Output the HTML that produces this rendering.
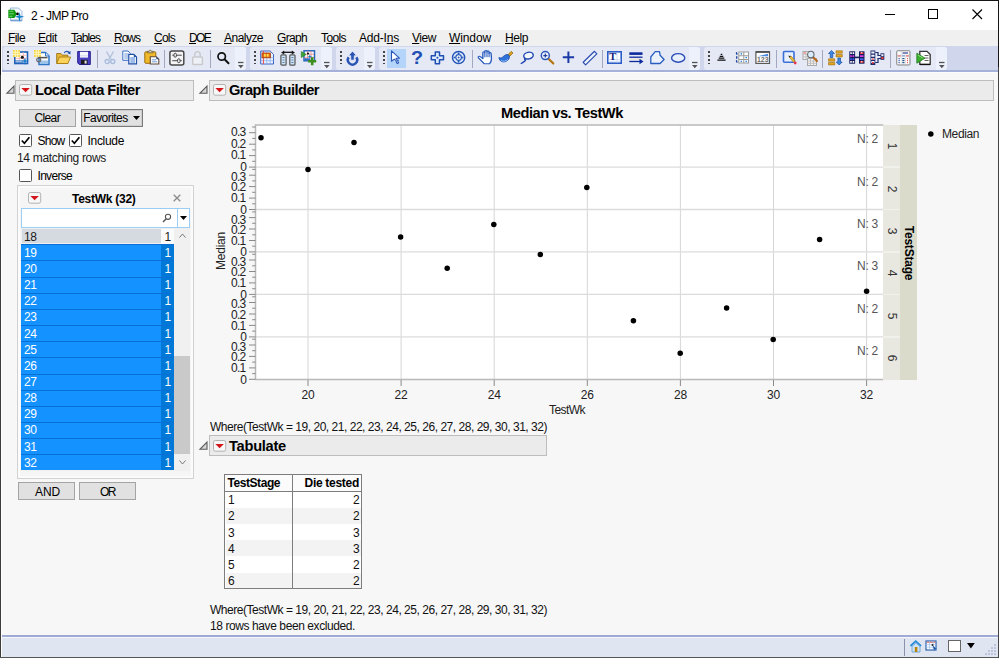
<!DOCTYPE html>
<html><head><meta charset="utf-8"><title>2 - JMP Pro</title>
<style>
html,body{margin:0;padding:0;background:#f7f7f7;}
body{width:999px;height:658px;overflow:hidden;position:relative;font-family:"Liberation Sans",sans-serif;}
#w{position:absolute;left:0;top:0;width:999px;height:658px;overflow:hidden;background:#f7f7f7;}
.t{position:absolute;white-space:nowrap;margin:0;padding:0;}
.b{position:absolute;}
svg{position:absolute;overflow:visible;}
u{text-decoration:underline;text-underline-offset:1px;}
</style></head><body><div id="w">
<div class="b" style="left:0px;top:0px;width:999px;height:30px;background:#ffffff;"></div>
<div class="t" style="left:31.00px;top:7.64px;font-size:12px;line-height:16px;letter-spacing:-0.557px;color:#000;">2 - JMP Pro</div>
<svg style="left:880px;top:5px" width="110" height="20" viewBox="0 0 110 20"><path d="M5 9.5h10" stroke="#000" stroke-width="1" fill="none"/><rect x="48.5" y="4.5" width="9" height="9" stroke="#000" stroke-width="1" fill="none"/><path d="M92.5 4.5l9.5 9.5M102 4.5l-9.5 9.5" stroke="#000" stroke-width="1.1" fill="none"/></svg>
<svg style="left:8px;top:7px" width="17" height="16" viewBox="0 0 17 16"><path d="M2.500 1h8l3.500 3.500v9.500h-11.500z" fill="#f3f7fd" stroke="#9db9e0" stroke-width="1"/><path d="M3 13.300h11" stroke="#6f9bd0" stroke-width="1.200"/><path d="M.3 2.800h6.200l2.300 4.100-2.300 4.100h-6.200z" fill="#129a12"/><path d="M1.300 4.300h4M1.300 6.800h4.500M1.300 9.300h3" stroke="#7fd87f" stroke-width=".9"/><circle cx="9.500" cy="6.900" r="1.300" fill="#000"/><path d="M11.500 5.200l.9 3.600 4 .9-4 1-.9 4.300-1-4.300-3.800-1 3.800-.9z" fill="#1583c8"/></svg>
<div class="b" style="left:0px;top:30px;width:999px;height:16px;background:#f0f0f0;"></div>
<div class="t" style="left:8.00px;top:30.24px;font-size:12px;line-height:16px;letter-spacing:-0.584px;color:#000;"><u>F</u>ile</div>
<div class="t" style="left:38.00px;top:30.24px;font-size:12px;line-height:16px;letter-spacing:-0.419px;color:#000;"><u>E</u>dit</div>
<div class="t" style="left:71.00px;top:30.24px;font-size:12px;line-height:16px;letter-spacing:-0.948px;color:#000;"><u>T</u>ables</div>
<div class="t" style="left:114.00px;top:30.24px;font-size:12px;line-height:16px;letter-spacing:-1.001px;color:#000;"><u>R</u>ows</div>
<div class="t" style="left:154.00px;top:30.24px;font-size:12px;line-height:16px;letter-spacing:-0.751px;color:#000;"><u>C</u>ols</div>
<div class="t" style="left:189.00px;top:30.24px;font-size:12px;line-height:16px;letter-spacing:-1.668px;color:#000;"><u>D</u>OE</div>
<div class="t" style="left:224.00px;top:30.24px;font-size:12px;line-height:16px;letter-spacing:-0.527px;color:#000;"><u>A</u>nalyze</div>
<div class="t" style="left:277.00px;top:30.24px;font-size:12px;line-height:16px;letter-spacing:-0.670px;color:#000;"><u>G</u>raph</div>
<div class="t" style="left:321.00px;top:30.24px;font-size:12px;line-height:16px;letter-spacing:-0.602px;color:#000;">T<u>o</u>ols</div>
<div class="t" style="left:359.00px;top:30.24px;font-size:12px;line-height:16px;letter-spacing:-0.193px;color:#000;">Add-I<u>n</u>s</div>
<div class="t" style="left:412.00px;top:30.24px;font-size:12px;line-height:16px;letter-spacing:-0.448px;color:#000;"><u>V</u>iew</div>
<div class="t" style="left:449.00px;top:30.24px;font-size:12px;line-height:16px;letter-spacing:-0.113px;color:#000;"><u>W</u>indow</div>
<div class="t" style="left:505.00px;top:30.24px;font-size:12px;line-height:16px;letter-spacing:-0.420px;color:#000;"><u>H</u>elp</div>
<div class="b" style="left:0px;top:46px;width:999px;height:24px;background:#d0d7ec;"></div>
<div class="b" style="left:0px;top:70px;width:999px;height:2px;background:#a6b1d9;"></div>
<div class="b" style="left:0px;top:72px;width:999px;height:1px;background:#fcfcfd;"></div>
<div class="b" style="left:3px;top:46.5px;width:243px;height:23.5px;background:#e5e9f6;border-radius:3px;"></div>
<div class="b" style="left:235px;top:46.5px;width:11px;height:23.5px;background:#edf1fb;border-radius:0 3px 3px 0;"></div>
<div class="b" style="left:7.2px;top:51.3px;width:1.7000000000000002px;height:1.7000000000000028px;background:#444;"></div>
<div class="b" style="left:7.2px;top:55.099999999999994px;width:1.7000000000000002px;height:1.7000000000000028px;background:#444;"></div>
<div class="b" style="left:7.2px;top:58.9px;width:1.7000000000000002px;height:1.7000000000000028px;background:#444;"></div>
<div class="b" style="left:7.2px;top:62.699999999999996px;width:1.7000000000000002px;height:1.70000000000001px;background:#444;"></div>
<svg style="left:238px;top:61px" width="6" height="8" viewBox="0 0 6 8"><path d="M0 1.500h5.500" stroke="#555" stroke-width="1.300"/><path d="M0 4h5.600l-2.800 3.200z" fill="#555"/></svg>
<div class="b" style="left:250px;top:46.5px;width:82px;height:23.5px;background:#e5e9f6;border-radius:3px;"></div>
<div class="b" style="left:321px;top:46.5px;width:11px;height:23.5px;background:#edf1fb;border-radius:0 3px 3px 0;"></div>
<div class="b" style="left:254.2px;top:51.3px;width:1.700000000000017px;height:1.7000000000000028px;background:#444;"></div>
<div class="b" style="left:254.2px;top:55.099999999999994px;width:1.700000000000017px;height:1.7000000000000028px;background:#444;"></div>
<div class="b" style="left:254.2px;top:58.9px;width:1.700000000000017px;height:1.7000000000000028px;background:#444;"></div>
<div class="b" style="left:254.2px;top:62.699999999999996px;width:1.700000000000017px;height:1.70000000000001px;background:#444;"></div>
<svg style="left:324px;top:61px" width="6" height="8" viewBox="0 0 6 8"><path d="M0 1.500h5.500" stroke="#555" stroke-width="1.300"/><path d="M0 4h5.600l-2.800 3.200z" fill="#555"/></svg>
<div class="b" style="left:336px;top:46.5px;width:39px;height:23.5px;background:#e5e9f6;border-radius:3px;"></div>
<div class="b" style="left:364px;top:46.5px;width:11px;height:23.5px;background:#edf1fb;border-radius:0 3px 3px 0;"></div>
<div class="b" style="left:340.2px;top:51.3px;width:1.6999999999999886px;height:1.7000000000000028px;background:#444;"></div>
<div class="b" style="left:340.2px;top:55.099999999999994px;width:1.6999999999999886px;height:1.7000000000000028px;background:#444;"></div>
<div class="b" style="left:340.2px;top:58.9px;width:1.6999999999999886px;height:1.7000000000000028px;background:#444;"></div>
<div class="b" style="left:340.2px;top:62.699999999999996px;width:1.6999999999999886px;height:1.70000000000001px;background:#444;"></div>
<svg style="left:367px;top:61px" width="6" height="8" viewBox="0 0 6 8"><path d="M0 1.500h5.500" stroke="#555" stroke-width="1.300"/><path d="M0 4h5.600l-2.800 3.200z" fill="#555"/></svg>
<div class="b" style="left:379px;top:46.5px;width:321px;height:23.5px;background:#e5e9f6;border-radius:3px;"></div>
<div class="b" style="left:689px;top:46.5px;width:11px;height:23.5px;background:#edf1fb;border-radius:0 3px 3px 0;"></div>
<div class="b" style="left:383.2px;top:51.3px;width:1.6999999999999886px;height:1.7000000000000028px;background:#444;"></div>
<div class="b" style="left:383.2px;top:55.099999999999994px;width:1.6999999999999886px;height:1.7000000000000028px;background:#444;"></div>
<div class="b" style="left:383.2px;top:58.9px;width:1.6999999999999886px;height:1.7000000000000028px;background:#444;"></div>
<div class="b" style="left:383.2px;top:62.699999999999996px;width:1.6999999999999886px;height:1.70000000000001px;background:#444;"></div>
<svg style="left:692px;top:61px" width="6" height="8" viewBox="0 0 6 8"><path d="M0 1.500h5.500" stroke="#555" stroke-width="1.300"/><path d="M0 4h5.600l-2.800 3.200z" fill="#555"/></svg>
<div class="b" style="left:704px;top:46.5px;width:243px;height:23.5px;background:#e5e9f6;border-radius:3px;"></div>
<div class="b" style="left:936px;top:46.5px;width:11px;height:23.5px;background:#edf1fb;border-radius:0 3px 3px 0;"></div>
<div class="b" style="left:708.2px;top:51.3px;width:1.6999999999999318px;height:1.7000000000000028px;background:#444;"></div>
<div class="b" style="left:708.2px;top:55.099999999999994px;width:1.6999999999999318px;height:1.7000000000000028px;background:#444;"></div>
<div class="b" style="left:708.2px;top:58.9px;width:1.6999999999999318px;height:1.7000000000000028px;background:#444;"></div>
<div class="b" style="left:708.2px;top:62.699999999999996px;width:1.6999999999999318px;height:1.70000000000001px;background:#444;"></div>
<svg style="left:939px;top:61px" width="6" height="8" viewBox="0 0 6 8"><path d="M0 1.500h5.500" stroke="#555" stroke-width="1.300"/><path d="M0 4h5.600l-2.800 3.200z" fill="#555"/></svg>
<div class="b" style="left:96.5px;top:50px;width:1.2000000000000028px;height:18px;background:#a3a7c0;"></div>
<div class="b" style="left:164px;top:50px;width:1.1999999999999886px;height:18px;background:#a3a7c0;"></div>
<div class="b" style="left:210px;top:50px;width:1.1999999999999886px;height:18px;background:#a3a7c0;"></div>
<div class="b" style="left:471.5px;top:50px;width:1.1999999999999886px;height:18px;background:#a3a7c0;"></div>
<div class="b" style="left:602px;top:50px;width:1.2000000000000455px;height:18px;background:#a3a7c0;"></div>
<div class="b" style="left:776px;top:50px;width:1.2000000000000455px;height:18px;background:#a3a7c0;"></div>
<div class="b" style="left:822px;top:50px;width:1.2000000000000455px;height:18px;background:#a3a7c0;"></div>
<div class="b" style="left:890px;top:50px;width:1.2000000000000455px;height:18px;background:#a3a7c0;"></div>
<svg style="left:13px;top:50px" width="16" height="15" viewBox="0 0 16 15"><rect x="1.800" y="2" width="12.700" height="11.500" fill="#fff" stroke="#1f5fb4" stroke-width="1.600"/><path d="M2 5.300h12M2 8.400h12M6.300 2v9M10.500 2v9" stroke="#eda2a2" stroke-width=".7"/><path d="M2.300 10.400h8v2.800h-8z" fill="#2e6fc2"/><path d="M2.800 11.800h7" stroke="#d6e4f7" stroke-width=".9"/><path d="M0 0h7v7h-7z" fill="#f6d84a"/><path d="M0 2.3h7M0 4.6h7M2.3 0v7M4.6 0v7" stroke="#fff7c8" stroke-width=".9"/><circle cx="9.300" cy="7.300" r="1.500" fill="#111"/><path d="M12 7.300l.9 3 3.300.7-3.300.8-.9 3.400-1-3.400-3-.8 3-.7z" fill="#1b7fd0"/></svg>
<svg style="left:34px;top:50px" width="16" height="16" viewBox="0 0 16 16"><path d="M5 2.5h6.5l3.5 3.5v8.5h-10z" fill="#fff" stroke="#2d74c4" stroke-width="1.5"/><path d="M11.5 2.5v3.5h3.5" fill="#dbe9f8" stroke="#2d74c4" stroke-width="1"/><path d="M6 10.5h8v3.5h-8z" fill="#9cc3ea"/><path d="M0 0h7v7h-7z" fill="#f6d84a"/><path d="M0 2.3h7M0 4.6h7M2.3 0v7M4.6 0v7" stroke="#fff7c8" stroke-width=".9"/><circle cx="4.7" cy="9.8" r="2" fill="none" stroke="#6b6b6b" stroke-width="1.2"/><path d="M4.5 7.6h9" stroke="#555" stroke-width="1.5"/></svg>
<svg style="left:56px;top:50px" width="16" height="15" viewBox="0 0 16 15"><path d="M0.7 3.5h4.2l1.3 1.6h5.6v8.2h-11.1z" fill="#e9b735" stroke="#9a7414" stroke-width=".9"/><path d="M3.3 7h11.3l-2.7 6.5h-11.2z" fill="#fbd25b" stroke="#a77d12" stroke-width=".9"/><path d="M8.2 3c1.3-2 3.6-2 4.9-.5" fill="none" stroke="#2a5db0" stroke-width="1.2"/><path d="M14.6 1l-.3 3.4-3-1.4z" fill="#1d4fa5"/></svg>
<svg style="left:77px;top:51px" width="14" height="14" viewBox="0 0 14 14"><path d="M.7 .5h12.6v13h-11l-1.6-1.6z" fill="#4a3fc0" stroke="#2a1f8e" stroke-width="1"/><rect x="3" y=".8" width="8" height="5.8" fill="#f4f6fb"/><path d="M3 4.8h8" stroke="#cfd4ea" stroke-width="1"/><rect x="4" y="8.8" width="6.6" height="4.4" fill="#1c1c1c"/><rect x="7.6" y="9.6" width="2" height="3" fill="#e8e8f4"/></svg>
<svg style="left:104px;top:51px" width="12" height="14" viewBox="0 0 12 14"><path d="M2.5 .5l4.5 8M9.5 .5l-4.500 8" stroke="#b5c3da" stroke-width="1.5" fill="none"/><circle cx="3.2" cy="10.6" r="2.1" fill="#dfe7f5" stroke="#a9bbdc" stroke-width="1.3"/><circle cx="8.800" cy="10.6" r="2.1" fill="#dfe7f5" stroke="#a9bbdc" stroke-width="1.3"/></svg>
<svg style="left:122px;top:50px" width="16" height="15" viewBox="0 0 16 15"><path d="M.8 1h5.2l2.500 2.500v6.800h-7.700z" fill="#fff" stroke="#3a6fc0" stroke-width="1"/><path d="M2.300 4h4M2.300 6h4.500M2.300 8h4.500" stroke="#5b8fd8" stroke-width=".9"/><path d="M6.800 4.300h5l2.700 2.700v6.800h-7.700z" fill="#fff" stroke="#1f4fa5" stroke-width="1.200"/><path d="M11.800 4.300v2.700h2.700z" fill="#1f4fa5"/><path d="M8.300 8h4.700M8.300 10h4.700M8.300 12h4.700" stroke="#3d7ad0" stroke-width="1"/></svg>
<svg style="left:144px;top:50px" width="16" height="15" viewBox="0 0 16 15"><rect x=".8" y="1.800" width="11" height="11.500" rx="1" fill="#f0b92b" stroke="#9b6d12" stroke-width="1"/><path d="M3.500 2.800v-1.500h1.700c0-1.500 2.200-1.500 2.200 0h1.700v1.500z" fill="#d9d9d9" stroke="#6b5a2a" stroke-width=".8"/><path d="M6.300 6.800h6l2.500 2.400v4.800h-8.500z" fill="#fff" stroke="#5f4a3a" stroke-width="1.100"/><path d="M12.300 6.800v2.400h2.500z" fill="#26467f"/><path d="M7.800 9.800h4.200M7.800 11.800h5.500" stroke="#6f9bd8" stroke-width="1"/></svg>
<svg style="left:169px;top:50px" width="16" height="16" viewBox="0 0 16 16"><rect x=".9" y=".9" width="13.900" height="14.200" rx="2" fill="#f4f4f6" stroke="#4a4a4a" stroke-width="1.500"/><path d="M3.300 5.200h9.500M3.300 10.700h9.500" stroke="#4a4a4a" stroke-width="1"/><rect x="5" y="3.200" width="2.400" height="4" rx="1.200" fill="#f4f4f6" stroke="#4a4a4a" stroke-width="1"/><rect x="8.600" y="8.700" width="2.400" height="4" rx="1.200" fill="#f4f4f6" stroke="#4a4a4a" stroke-width="1"/></svg>
<svg style="left:191px;top:50px" width="13" height="16" viewBox="0 0 13 16"><path d="M3.800 7v-2.500c0-3.800 5.400-3.800 5.400 0v2.500" fill="none" stroke="#c9c9cc" stroke-width="1.400"/><rect x="1.700" y="7" width="9.700" height="7.500" rx=".8" fill="#eef0f7" stroke="#c9c9cc" stroke-width="1.400"/></svg>
<svg style="left:216px;top:51px" width="14" height="14" viewBox="0 0 14 14"><circle cx="5.700" cy="5.500" r="3.700" fill="none" stroke="#111" stroke-width="1.700"/><path d="M8.500 8.300l4 4" stroke="#111" stroke-width="2" stroke-linecap="round"/></svg>
<svg style="left:260px;top:50px" width="14" height="15" viewBox="0 0 14 15"><path d="M.7 1h9.500l3.300 3.300v9.700h-12.800z" fill="#eaf2ff" stroke="#3a62c4" stroke-width="1"/><path d="M.7 7.500h12.800M.7 10.700h12.800M6.800 1v13M10.200 4v10" stroke="#8fb3ef" stroke-width=".8"/><path d="M3.400 1v13" stroke="#ee4b4b" stroke-width="1"/><rect x="2" y="3" width="8.500" height="4.800" fill="#e8671b" stroke="#a8420e" stroke-width=".8"/><rect x="4" y="4" width="1.800" height="2.700" fill="#f6e24a"/><rect x="6.800" y="4" width="1.800" height="2.700" fill="#f6e24a"/></svg>
<svg style="left:280px;top:50px" width="16" height="16" viewBox="0 0 16 16"><path d="M3 2.300h10" fill="none" stroke="#111" stroke-width="1.300"/><path d="M1 2.800l3.200-2.300v3.800zM15 2.800l-3.200-2.300v3.800z" fill="#111"/><rect x=".9" y="4.800" width="5.200" height="10.400" rx="1" fill="#cfe3f5" stroke="#555" stroke-width="1.200"/><rect x="9.800" y="4.800" width="5.200" height="10.400" rx="1" fill="#cfe3f5" stroke="#555" stroke-width="1.200"/><path d="M2.500 7.500h2M2.500 10h2M2.500 12.500h2M11.400 7.500h2M11.400 10h2M11.400 12.500h2" stroke="#5b7fa8" stroke-width="1"/></svg>
<svg style="left:301px;top:50px" width="16" height="16" viewBox="0 0 16 16"><rect x="3" y=".8" width="10.500" height="10" fill="#fff" stroke="#2a66b8" stroke-width="1.500"/><path d="M3 4.200h10M3 7.400h10M6.500 1v9.500M10 1v9.500" stroke="#e27a7a" stroke-width=".7"/><path d="M3.300 8.300h6v2.200h-6z" fill="#2e6fc2"/><circle cx="7" cy="3.500" r="1.100" fill="#111"/><path d="M8.800 4.200l.7 1.800 2 .5-2 .5-.7 1.900-.6-1.900-1.900-.5 1.900-.5z" fill="#1b7fd0"/><path d="M.3 1.500l4.800 3-4.800 3z" fill="#3aa535" stroke="#1f7a1c" stroke-width=".6"/><path d="M11.200 7.200v8M7.200 11.200h8" stroke="#3a8f1e" stroke-width="2.600"/></svg>
<svg style="left:346px;top:51px" width="13" height="14" viewBox="0 0 13 14"><path d="M2.700 6.300a4.600 4.600 0 1 0 7.600 0" fill="none" stroke="#2a55b5" stroke-width="2.500"/><path d="M6.500 0l4.300 4.800h-2.500v4.400h-3.600v-4.400h-2.500z" fill="#2a55b5" stroke="#e8ecf8" stroke-width=".9"/></svg>
<div class="b" style="left:387px;top:49px;width:19px;height:18.500px;background:#b4d4fa"></div>
<svg style="left:390px;top:50px" width="11" height="15" viewBox="0 0 11 15"><path d="M1.500 .8v10.500l2.800-2.200 1.600 1.300c.4 1.600.4 2.200 1.400 3.200l1.300-.8c-.9-.9-.9-1.900-.4-2.600h-.9l-1.200-2h3.300z" fill="#fff" stroke="#2a56b8" stroke-width="1.100" stroke-linejoin="round"/></svg>
<div class="t" style="left:411px;top:47.800px;font-size:18px;line-height:20px;font-weight:bold;color:#1f4fb3;transform:scaleX(1.100);transform-origin:left">?</div>
<svg style="left:430px;top:51px" width="15" height="14" viewBox="0 0 15 14"><path d="M5.300 .9h4.200v3.900h4v4h-4v3.900h-4.200v-3.900h-4v-4h4z" fill="#ddeafb" stroke="#1f4fb3" stroke-width="1.500" stroke-linejoin="round"/><circle cx="7.400" cy="6.800" r="1" fill="#1f4fb3"/></svg>
<svg style="left:451px;top:50px" width="15" height="15" viewBox="0 0 15 15"><circle cx="7.600" cy="7.500" r="6.100" fill="#e3edfb" stroke="#2556b8" stroke-width="1.500"/><circle cx="7.600" cy="7.500" r="2.800" fill="#fff" stroke="#2556b8" stroke-width="1.200"/><circle cx="7.600" cy="7.500" r="1" fill="#2556b8"/><path d="M7.600 2.300l1.300 1.700h-2.600zM7.600 12.700l1.300-1.700h-2.600zM2.400 7.500l1.700-1.300v2.600zM12.800 7.500l-1.700-1.300v2.600z" fill="#2556b8"/></svg>
<svg style="left:476px;top:50px" width="18" height="15" viewBox="0 0 18 15"><g transform="translate(0.6 0) scale(1.250 1)"><path d="M6.200 13.800l-4.700-6c-.7-1.200.6-2 1.500-1.100l2 2v-6c0-1.300 1.500-1.300 1.600 0v-1.200c.1-1.300 1.600-1.300 1.700 0v.6c.1-1.300 1.600-1.300 1.700 0v1.300c.2-1.200 1.600-1.100 1.600.1l.3 5.200c0 2-.5 3.600-1.500 5.100z" fill="#fff" stroke="#2a5dc0" stroke-width="1.100" stroke-linejoin="round"/><path d="M6.600 2.800v4.500M8.300 2.300v5M10 2.800v4.500" stroke="#2a5dc0" stroke-width=".9"/></g></svg>
<svg style="left:498px;top:50px" width="16" height="14" viewBox="0 0 16 14"><path d="M9.800 4.800l3.500-3.500 1.700 1.700-3.500 3.500z" fill="#d8a31f" stroke="#8a6410" stroke-width=".7"/><path d="M1.200 7.200c.8 1.200 2.300 1 3.500-.2 2-2 4-3 5.500-2.300 1.700.8 1.800 3.500-.4 5.500-2.500 2.300-6.300 2.300-8-.2-.8-1.200-.9-2.300-.6-2.800z" fill="#2f72d8" stroke="#1c4aa8" stroke-width=".8"/><path d="M3 10.500c2 1.200 5 .8 6.800-1" stroke="#8fc0ff" stroke-width="1" fill="none"/></svg>
<svg style="left:520px;top:51px" width="15" height="14" viewBox="0 0 15 14"><ellipse cx="8.500" cy="4.600" rx="4.800" ry="3.300" fill="#f2f6fd" stroke="#2147b0" stroke-width="1.400" transform="rotate(-12 8.500 4.600)"/><path d="M5 7.200c-.8.800-.2 1.800.6 1.800-.3 1-2.600 2.500-4.400 3.500" fill="none" stroke="#2147b0" stroke-width="1.400" stroke-linecap="round"/></svg>
<svg style="left:540px;top:50px" width="15" height="15" viewBox="0 0 15 15"><path d="M8.300 8.600l5 4.800" stroke="#c8841a" stroke-width="2.200" stroke-linecap="round"/><path d="M8.300 8.600l5 4.800" stroke="#6b4a12" stroke-width=".5" transform="translate(.6 .9)"/><circle cx="5.300" cy="5.600" r="4" fill="#f2f6ff" stroke="#2a56b8" stroke-width="1.500"/><path d="M3.300 5.600h4M5.300 3.600v4" stroke="#1f3f9a" stroke-width="1.200"/></svg>
<svg style="left:562px;top:51px" width="13" height="13" viewBox="0 0 13 13"><path d="M6.400 .6v11.300M.8 6.200h11.300" stroke="#1b3aa6" stroke-width="2"/></svg>
<svg style="left:582px;top:50px" width="16" height="16" viewBox="0 0 16 16"><path d="M1.200 12.300l11.300-11 2.300 2.600-11.200 11z" fill="#eef2fb" stroke="#2a4db0" stroke-width="1.200" stroke-linejoin="round"/></svg>
<svg style="left:607px;top:51px" width="15" height="13" viewBox="0 0 15 13"><rect x=".8" y=".8" width="13.400" height="11.400" fill="#fff" stroke="#2a5dc8" stroke-width="1.600"/><path d="M10 2v9.500M1.500 8.500h12M1.500 10.300h12" stroke="#c6d8f2" stroke-width=".8"/><text x="2.200" y="9" font-family="Liberation Serif,serif" font-weight="bold" font-size="10.500" fill="#101a80">T</text></svg>
<svg style="left:629px;top:51px" width="15" height="13" viewBox="0 0 15 13"><path d="M.3 2.600h13.200" stroke="#0b2a9c" stroke-width="2.600"/><path d="M.3 6.200h13.200" stroke="#0b2a9c" stroke-width="1.300"/><path d="M.3 8.200h13.200" stroke="#efe6c8" stroke-width="1"/><path d="M.3 10.500h11" stroke="#0b2a9c" stroke-width="1.300"/><path d="M10.500 7.800l4 2.700-4 2.700z" fill="#0b2a9c"/></svg>
<svg style="left:650px;top:50px" width="15" height="15" viewBox="0 0 15 15"><path d="M.8 7l4.400-5.300h4.300l.6 3.500 4 4.300-4 4h-9.300z" fill="#eaf1fc" stroke="#2a5dc0" stroke-width="1.300" stroke-linejoin="round"/></svg>
<svg style="left:670px;top:52px" width="16" height="12" viewBox="0 0 16 12"><ellipse cx="8.200" cy="5.900" rx="6.600" ry="4.300" fill="#e8f0fc" stroke="#2a4db8" stroke-width="1.400"/></svg>
<svg style="left:716px;top:53px" width="11" height="9" viewBox="0 0 11 9"><path d="M4.700 1.400h1.600M3.700 3.300h3.600M2.700 5.200h5.600M1.400 7.200h8.200" stroke="#111" stroke-width="1.300"/></svg>
<svg style="left:735px;top:51px" width="15" height="13" viewBox="0 0 15 13"><rect x="3.300" y=".5" width="10.700" height="12" fill="#9a9a9a"/><path d="M4.300 1.500h4v2.800h-4zM9.300 1.500h3.700v2.800h-3.700zM4.300 5.300h4v2.600h-4zM9.300 5.300h3.700v2.600h-3.700zM4.300 8.900h4v2.600h-4zM9.300 8.900h3.700v2.600h-3.700z" fill="#fff"/><circle cx="6.300" cy="2.900" r=".8" fill="#1e7fe0"/><circle cx="11.200" cy="6.600" r=".8" fill="#1e7fe0"/><circle cx="6.300" cy="10.200" r=".8" fill="#1e7fe0"/><circle cx="11.200" cy="10.200" r=".8" fill="#1e7fe0"/><path d="M1.300 1.300l.8 2.500M1.700 5.300v2.500M1.300 9.300l.8 2.300" stroke="#1a3f9a" stroke-width="1.300"/></svg>
<svg style="left:755px;top:51px" width="16" height="13" viewBox="0 0 16 13"><rect x=".9" y=".8" width="13.600" height="11.600" fill="#fff" stroke="#5a5a5a" stroke-width="1.200"/><path d="M1 1h13.400" stroke="#444" stroke-width="1.500"/><path d="M2.800 5.300l10.200-2.500v2.500z" fill="#4a8be0"/><text x="2" y="11.300" font-family="Liberation Sans,sans-serif" font-size="6.500" font-weight="bold" fill="#6d6d6d" textLength="11.500" lengthAdjust="spacingAndGlyphs">123</text></svg>
<svg style="left:782px;top:50px" width="15" height="16" viewBox="0 0 15 16"><rect x="1.500" y="1.500" width="10.500" height="10.800" rx="1" fill="#e9f1fd" stroke="#3a6fd8" stroke-width="1.600"/><path d="M7.300 7.200l4.300 5.100 1.600-1.300-4.300-5.100z" fill="#f1c232" stroke="#8a6410" stroke-width=".6"/><path d="M6.300 5.600l1 2 1.500-1.400z" fill="#222"/><circle cx="13.200" cy="13" r="1.400" fill="#e8354a"/></svg>
<svg style="left:802px;top:50px" width="17" height="16" viewBox="0 0 17 16"><rect x="1" y="1.500" width="9" height="8" fill="#f4f4f4" stroke="#a8a8a8" stroke-width="1"/><path d="M1 4.200h9M1 6.900h9M4 1.500v8M7 1.500v8" stroke="#b5b5b5" stroke-width=".8"/><path d="M1.500 2h2.300v2h-2.300z" fill="#f0a0a0"/><rect x="5.500" y="8.500" width="9" height="7" fill="#f4f4f4" stroke="#a8a8a8" stroke-width="1"/><path d="M5.500 11h9M5.500 13.300h9M8.500 8.500v7M11.500 8.500v7" stroke="#b5b5b5" stroke-width=".8"/><path d="M11 7l4 4" stroke="#b8651a" stroke-width="2" stroke-linecap="round"/><circle cx="8.800" cy="4.500" r="3.200" fill="#d8ecff" stroke="#6a6a6a" stroke-width="1.100"/></svg>
<svg style="left:828px;top:50px" width="15" height="16" viewBox="0 0 15 16"><path d="M3.500 .5l3 3h-1.700v4h-2.600v-4h-1.700z" fill="#3d8be0" stroke="#1a4fa8" stroke-width=".7"/><path d="M11.200 15l3-3h-1.700v-4h-2.600v4h-1.700z" fill="#3d8be0" stroke="#1a4fa8" stroke-width=".7"/><path d="M8 .8h6.300v2.400h-6.300zM8 4.500h6.300v2.400h-6.300zM.5 8.800h6.300v2.400h-6.300zM.5 12.500h6.300v2.400h-6.300z" fill="#e2a820" stroke="#9a6c10" stroke-width=".6"/></svg>
<svg style="left:849px;top:51px" width="16" height="13" viewBox="0 0 16 13"><rect x=".3" y=".3" width="5.800" height="12.400" fill="#141a5a"/><rect x="10" y=".3" width="5.500" height="12.400" fill="#141a5a"/><path d="M6 6.400h4" stroke="#141a5a" stroke-width="1.600"/><path d="M1.200 1.300h1.600v1.600h-1.600zM3.600 1.300h1.600v1.600h-1.600zM1.200 10.100h1.600v1.600h-1.600zM3.600 10.100h1.600v1.600h-1.600z" fill="#fff"/><path d="M1.200 4.200h1.600v1.700h-1.600zM3.600 4.200h1.600v1.700h-1.600zM11 4.200h3.500v1.700h-3.500z" fill="#e040e0"/><path d="M1.200 7.200h1.600v1.700h-1.600zM3.600 7.200h1.600v1.700h-1.600zM11 7.200h3.500v1.700h-3.500z" fill="#3a6ae8"/><path d="M11 1.300h3.500v1.700h-3.500zM11 10.100h3.500v1.700h-3.500z" fill="#e83a3a"/><path d="M12 1.300h1.300v1h-1.300zM12 10.300h1.300v1h-1.300z" fill="#fff"/></svg>
<svg style="left:870px;top:50px" width="15" height="16" viewBox="0 0 15 16"><rect x=".5" y=".5" width="4.800" height="14.500" fill="#1a2a6a"/><path d="M1.300 1.500h3.200v2h-3.200zM1.300 4.700h3.200v2h-3.200zM1.300 7.900h3.200v2h-3.200zM1.300 11.100h3.200v2h-3.200z" fill="#f4f4ff"/><path d="M2 12h1.800v1.800h-1.800zM2 8.500h1.800v1.300h-1.800z" fill="#e83a3a"/><path d="M5.300 2.500h2.700v3h3M5.300 12.500h2.700v-4h3" fill="none" stroke="#1a2a6a" stroke-width="1.200"/><rect x="10.500" y="3.300" width="3.800" height="6.500" fill="#1a2a6a"/><path d="M11.300 4.200h2.200v2h-2.200z" fill="#f4f4ff"/><path d="M11.300 7h2.200v2h-2.200z" fill="#e83a3a"/></svg>
<svg style="left:896px;top:50px" width="15" height="16" viewBox="0 0 15 16"><rect x=".7" y=".7" width="13.300" height="14.300" rx="1" fill="#e4e4e4" stroke="#8a8a8a" stroke-width="1"/><rect x="1.700" y="1.700" width="3" height="2.800" fill="#fff"/><rect x="5.800" y="1.700" width="7.200" height="2.800" fill="#fff"/><path d="M6.500 3h5.500" stroke="#3a4a9a" stroke-width="1.300"/><path d="M1.700 5.800h3M10 5.800h3" stroke="#e87a7a" stroke-width="1.300"/><path d="M5.800 5.800h3.200" stroke="#8aa8d8" stroke-width="1.300"/><rect x="1.700" y="7.300" width="3" height="6.700" fill="#fff"/><rect x="5.800" y="7.300" width="3.200" height="6.700" fill="#fff"/><rect x="10" y="7.300" width="3" height="6.700" fill="#fff"/><path d="M2.500 8.700h1.300M2.500 10.700h1.300M2.500 12.700h1.300" stroke="#1a3a9a" stroke-width="1"/><path d="M6.300 8.700h2.200M6.300 10.700h2.200M6.300 12.700h2.200" stroke="#2a5a8a" stroke-width="1.200"/><path d="M11 8.700h1M11 10.700h1M11 12.700h1" stroke="#e83a3a" stroke-width="1"/></svg>
<svg style="left:916px;top:50px" width="16" height="16" viewBox="0 0 16 16"><path d="M3.800 1.300h7.200l3.200 3.200v9.800h-10.400z" fill="#fff" stroke="#333" stroke-width="1.300"/><path d="M4 14.500h10" stroke="#111" stroke-width="1.300"/><path d="M8.500 5.500h4M8.500 8h4M8.500 10.500h4" stroke="#555" stroke-width=".9"/><path d="M.8 3.200l8.200 5-8.200 5z" fill="#3cb02e" stroke="#1f7a1c" stroke-width=".8"/><path d="M1.800 5l5 3" stroke="#8fe07f" stroke-width="1"/></svg>
<div class="b" style="left:0px;top:73px;width:999px;height:563px;background:#f7f7f7;"></div>
<svg style="left:5.5px;top:85.3px" width="9" height="9" viewBox="0 0 9 9"><path d="M8 1V8.300H0.900z" fill="#d6d6d6" stroke="#5c5c5c" stroke-width="1.100"/></svg>
<div class="b" style="left:15px;top:80px;width:179px;height:21px;background:#ebebeb;border:1px solid #bdbdbd;box-sizing:border-box;"></div>
<svg style="left:19.2px;top:84.2px" width="13" height="12" viewBox="0 0 13 12"><rect x=".5" y=".5" width="12.200" height="10.700" rx="1.800" fill="#f7f7f7" stroke="#b2b2b2"/><path d="M2.400 4h8.400L6.600 8.200z" fill="#d4151a"/></svg>
<div class="t" style="left:35.00px;top:80.67px;font-size:14.67px;line-height:19px;letter-spacing:-0.537px;color:#000;font-weight:bold;">Local Data Filter</div>
<div class="b" style="left:19px;top:108.5px;width:57px;height:18.0px;background:#e1e1e1;border:1px solid #a4a4a4;box-sizing:border-box;"></div>
<div class="t" style="left:34.50px;top:110.44px;font-size:12px;line-height:16px;letter-spacing:-0.635px;color:#000;">Clear</div>
<div class="b" style="left:81px;top:108.5px;width:62px;height:18.0px;background:#e1e1e1;border:1px solid #7a7a7a;box-sizing:border-box;box-shadow:inset 0 0 0 1px #cfcfcf;"></div>
<div class="t" style="left:83.30px;top:110.34px;font-size:12px;line-height:16px;letter-spacing:-0.560px;color:#000;">Favorites</div>
<svg style="left:133px;top:116px" width="7" height="4" viewBox="0 0 7 4"><path d="M0 0h7L3.5 4z" fill="#000"/></svg>
<div class="b" style="left:19px;top:134px;width:13px;height:13px;background:#fff;border:1px solid #555;box-sizing:border-box;border-radius:1.500px;"></div>
<svg style="left:19px;top:134px" width="13" height="13" viewBox="0 0 13 13"><path d="M2.8 6.5l2.6 2.8 5-6" stroke="#000" stroke-width="1.700" fill="none"/></svg>
<div class="t" style="left:37.50px;top:132.94px;font-size:12px;line-height:16px;letter-spacing:-0.754px;color:#000;">Show</div>
<div class="b" style="left:69px;top:134px;width:13px;height:13px;background:#fff;border:1px solid #555;box-sizing:border-box;border-radius:1.500px;"></div>
<svg style="left:69px;top:134px" width="13" height="13" viewBox="0 0 13 13"><path d="M2.8 6.5l2.6 2.8 5-6" stroke="#000" stroke-width="1.700" fill="none"/></svg>
<div class="t" style="left:87.50px;top:132.94px;font-size:12px;line-height:16px;letter-spacing:-0.313px;color:#000;">Include</div>
<div class="t" style="left:17.00px;top:149.64px;font-size:12px;line-height:16px;letter-spacing:-0.315px;color:#1a1a1a;">14 matching rows</div>
<div class="b" style="left:19px;top:169px;width:13px;height:13px;background:#fff;border:1px solid #555;box-sizing:border-box;border-radius:1.500px;"></div>
<div class="t" style="left:37.50px;top:167.94px;font-size:12px;line-height:16px;letter-spacing:-0.693px;color:#000;">Inverse</div>
<div class="b" style="left:17.3px;top:185.3px;width:177.2px;height:294.2px;background:#f5f5f5;border:1px solid #d2d2d2;box-sizing:border-box;box-shadow:inset 0 0 0 2px #fbfbfb;"></div>
<svg style="left:27.7px;top:192.2px" width="13" height="12" viewBox="0 0 13 12"><rect x=".5" y=".5" width="12.200" height="10.700" rx="1.800" fill="#f7f7f7" stroke="#b2b2b2"/><path d="M2.400 4h8.400L6.600 8.200z" fill="#d4151a"/></svg>
<div class="t" style="left:72.00px;top:190.94px;font-size:12px;line-height:16px;letter-spacing:-0.268px;color:#000;font-weight:bold;">TestWk (32)</div>
<svg style="left:173px;top:194px" width="8" height="8" viewBox="0 0 8 8"><path d="M0.7 0.7l6.6 6.6M7.3 0.7L0.7 7.3" stroke="#8a8a8a" stroke-width="1.3" fill="none"/></svg>
<div class="b" style="left:21px;top:208px;width:169px;height:20px;background:#fff;border:1px solid #9ccdf4;box-sizing:border-box;"></div>
<div class="b" style="left:177px;top:209px;width:1px;height:18px;background:#9ccdf4;"></div>
<svg style="left:162px;top:213px" width="10" height="10" viewBox="0 0 10 10"><circle cx="6" cy="3.8" r="2.6" stroke="#555" stroke-width="1.1" fill="none"/><path d="M4 6L1 9" stroke="#555" stroke-width="1.4"/></svg>
<svg style="left:180px;top:216px" width="7" height="4" viewBox="0 0 7 4"><path d="M0 0h7L3.5 4z" fill="#000"/></svg>
<div class="b" style="left:21px;top:228px;width:169px;height:242.5px;background:#f0f0f0;"></div>
<div class="b" style="left:22px;top:229px;width:139px;height:14px;background:#d5d9e0;"></div>
<div class="b" style="left:161px;top:229px;width:13px;height:15px;background:#fbfbfb;"></div>
<div class="t" style="left:24.00px;top:228.54px;font-size:12px;line-height:16px;letter-spacing:-0.423px;color:#1a1a1a;">18</div>
<div class="t" style="left:164.50px;top:228.54px;font-size:12px;line-height:16px;letter-spacing:-0.673px;color:#1a1a1a;">1</div>
<div class="b" style="left:21px;top:244px;width:140px;height:16px;background:#1492ff;"></div>
<div class="b" style="left:161px;top:244px;width:13px;height:16px;background:#0078d7;"></div>
<div class="b" style="left:21px;top:243.5px;width:153px;height:1.8000000000000114px;background:#0a6fd4;"></div>
<div class="t" style="left:24.00px;top:244.70px;font-size:12px;line-height:16px;letter-spacing:-0.423px;color:#fff;">19</div>
<div class="t" style="left:164.50px;top:244.70px;font-size:12px;line-height:16px;letter-spacing:-0.673px;color:#fff;">1</div>
<div class="b" style="left:21px;top:260px;width:140px;height:17px;background:#1492ff;"></div>
<div class="b" style="left:161px;top:260px;width:13px;height:17px;background:#0078d7;"></div>
<div class="b" style="left:21px;top:259.5px;width:153px;height:1.8000000000000114px;background:#0a6fd4;"></div>
<div class="t" style="left:24.00px;top:260.86px;font-size:12px;line-height:16px;letter-spacing:-0.423px;color:#fff;">20</div>
<div class="t" style="left:164.50px;top:260.86px;font-size:12px;line-height:16px;letter-spacing:-0.673px;color:#fff;">1</div>
<div class="b" style="left:21px;top:277px;width:140px;height:16px;background:#1492ff;"></div>
<div class="b" style="left:161px;top:277px;width:13px;height:16px;background:#0078d7;"></div>
<div class="b" style="left:21px;top:276.5px;width:153px;height:1.8000000000000114px;background:#0a6fd4;"></div>
<div class="t" style="left:24.00px;top:277.02px;font-size:12px;line-height:16px;letter-spacing:-0.423px;color:#fff;">21</div>
<div class="t" style="left:164.50px;top:277.02px;font-size:12px;line-height:16px;letter-spacing:-0.673px;color:#fff;">1</div>
<div class="b" style="left:21px;top:293px;width:140px;height:16px;background:#1492ff;"></div>
<div class="b" style="left:161px;top:293px;width:13px;height:16px;background:#0078d7;"></div>
<div class="b" style="left:21px;top:292.5px;width:153px;height:1.8000000000000114px;background:#0a6fd4;"></div>
<div class="t" style="left:24.00px;top:293.18px;font-size:12px;line-height:16px;letter-spacing:-0.423px;color:#fff;">22</div>
<div class="t" style="left:164.50px;top:293.18px;font-size:12px;line-height:16px;letter-spacing:-0.673px;color:#fff;">1</div>
<div class="b" style="left:21px;top:309px;width:140px;height:16px;background:#1492ff;"></div>
<div class="b" style="left:161px;top:309px;width:13px;height:16px;background:#0078d7;"></div>
<div class="b" style="left:21px;top:308.5px;width:153px;height:1.8000000000000114px;background:#0a6fd4;"></div>
<div class="t" style="left:24.00px;top:309.34px;font-size:12px;line-height:16px;letter-spacing:-0.423px;color:#fff;">23</div>
<div class="t" style="left:164.50px;top:309.34px;font-size:12px;line-height:16px;letter-spacing:-0.673px;color:#fff;">1</div>
<div class="b" style="left:21px;top:325px;width:140px;height:16px;background:#1492ff;"></div>
<div class="b" style="left:161px;top:325px;width:13px;height:16px;background:#0078d7;"></div>
<div class="b" style="left:21px;top:324.5px;width:153px;height:1.8000000000000114px;background:#0a6fd4;"></div>
<div class="t" style="left:24.00px;top:325.50px;font-size:12px;line-height:16px;letter-spacing:-0.423px;color:#fff;">24</div>
<div class="t" style="left:164.50px;top:325.50px;font-size:12px;line-height:16px;letter-spacing:-0.673px;color:#fff;">1</div>
<div class="b" style="left:21px;top:341px;width:140px;height:16px;background:#1492ff;"></div>
<div class="b" style="left:161px;top:341px;width:13px;height:16px;background:#0078d7;"></div>
<div class="b" style="left:21px;top:340.5px;width:153px;height:1.8000000000000114px;background:#0a6fd4;"></div>
<div class="t" style="left:24.00px;top:341.66px;font-size:12px;line-height:16px;letter-spacing:-0.423px;color:#fff;">25</div>
<div class="t" style="left:164.50px;top:341.66px;font-size:12px;line-height:16px;letter-spacing:-0.673px;color:#fff;">1</div>
<div class="b" style="left:21px;top:357px;width:140px;height:17px;background:#1492ff;"></div>
<div class="b" style="left:161px;top:357px;width:13px;height:17px;background:#0078d7;"></div>
<div class="b" style="left:21px;top:356.5px;width:153px;height:1.8000000000000114px;background:#0a6fd4;"></div>
<div class="t" style="left:24.00px;top:357.82px;font-size:12px;line-height:16px;letter-spacing:-0.423px;color:#fff;">26</div>
<div class="t" style="left:164.50px;top:357.82px;font-size:12px;line-height:16px;letter-spacing:-0.673px;color:#fff;">1</div>
<div class="b" style="left:21px;top:374px;width:140px;height:16px;background:#1492ff;"></div>
<div class="b" style="left:161px;top:374px;width:13px;height:16px;background:#0078d7;"></div>
<div class="b" style="left:21px;top:373.5px;width:153px;height:1.8000000000000114px;background:#0a6fd4;"></div>
<div class="t" style="left:24.00px;top:373.98px;font-size:12px;line-height:16px;letter-spacing:-0.423px;color:#fff;">27</div>
<div class="t" style="left:164.50px;top:373.98px;font-size:12px;line-height:16px;letter-spacing:-0.673px;color:#fff;">1</div>
<div class="b" style="left:21px;top:390px;width:140px;height:16px;background:#1492ff;"></div>
<div class="b" style="left:161px;top:390px;width:13px;height:16px;background:#0078d7;"></div>
<div class="b" style="left:21px;top:389.5px;width:153px;height:1.8000000000000114px;background:#0a6fd4;"></div>
<div class="t" style="left:24.00px;top:390.14px;font-size:12px;line-height:16px;letter-spacing:-0.423px;color:#fff;">28</div>
<div class="t" style="left:164.50px;top:390.14px;font-size:12px;line-height:16px;letter-spacing:-0.673px;color:#fff;">1</div>
<div class="b" style="left:21px;top:406px;width:140px;height:16px;background:#1492ff;"></div>
<div class="b" style="left:161px;top:406px;width:13px;height:16px;background:#0078d7;"></div>
<div class="b" style="left:21px;top:405.5px;width:153px;height:1.8000000000000114px;background:#0a6fd4;"></div>
<div class="t" style="left:24.00px;top:406.30px;font-size:12px;line-height:16px;letter-spacing:-0.423px;color:#fff;">29</div>
<div class="t" style="left:164.50px;top:406.30px;font-size:12px;line-height:16px;letter-spacing:-0.673px;color:#fff;">1</div>
<div class="b" style="left:21px;top:422px;width:140px;height:16px;background:#1492ff;"></div>
<div class="b" style="left:161px;top:422px;width:13px;height:16px;background:#0078d7;"></div>
<div class="b" style="left:21px;top:421.5px;width:153px;height:1.8000000000000114px;background:#0a6fd4;"></div>
<div class="t" style="left:24.00px;top:422.46px;font-size:12px;line-height:16px;letter-spacing:-0.423px;color:#fff;">30</div>
<div class="t" style="left:164.50px;top:422.46px;font-size:12px;line-height:16px;letter-spacing:-0.673px;color:#fff;">1</div>
<div class="b" style="left:21px;top:438px;width:140px;height:16px;background:#1492ff;"></div>
<div class="b" style="left:161px;top:438px;width:13px;height:16px;background:#0078d7;"></div>
<div class="b" style="left:21px;top:437.5px;width:153px;height:1.8000000000000114px;background:#0a6fd4;"></div>
<div class="t" style="left:24.00px;top:438.62px;font-size:12px;line-height:16px;letter-spacing:-0.423px;color:#fff;">31</div>
<div class="t" style="left:164.50px;top:438.62px;font-size:12px;line-height:16px;letter-spacing:-0.673px;color:#fff;">1</div>
<div class="b" style="left:21px;top:454px;width:140px;height:16px;background:#1492ff;"></div>
<div class="b" style="left:161px;top:454px;width:13px;height:16px;background:#0078d7;"></div>
<div class="b" style="left:21px;top:453.5px;width:153px;height:1.8000000000000114px;background:#0a6fd4;"></div>
<div class="t" style="left:24.00px;top:454.78px;font-size:12px;line-height:16px;letter-spacing:-0.423px;color:#fff;">32</div>
<div class="t" style="left:164.50px;top:454.78px;font-size:12px;line-height:16px;letter-spacing:-0.673px;color:#fff;">1</div>
<div class="b" style="left:174px;top:228px;width:16px;height:242.5px;background:#f0f0f0;"></div>
<div class="b" style="left:174px;top:356px;width:16px;height:98px;background:#c9c9c9;"></div>
<svg style="left:179px;top:233px" width="7" height="5" viewBox="0 0 7 5"><path d="M0.5 4.5L3.5 1l3 3.5" stroke="#7a7a7a" stroke-width="1" fill="none"/></svg>
<svg style="left:179px;top:460px" width="7" height="5" viewBox="0 0 7 5"><path d="M0.5 0.5L3.5 4l3-3.5" stroke="#7a7a7a" stroke-width="1" fill="none"/></svg>
<div class="b" style="left:18px;top:482px;width:57px;height:18px;background:#e1e1e1;border:1px solid #a4a4a4;box-sizing:border-box;"></div>
<div class="t" style="left:35.00px;top:483.94px;font-size:12px;line-height:16px;letter-spacing:-0.112px;color:#000;">AND</div>
<div class="b" style="left:79px;top:482px;width:57px;height:18px;background:#e1e1e1;border:1px solid #a4a4a4;box-sizing:border-box;"></div>
<div class="t" style="left:100.00px;top:483.94px;font-size:12px;line-height:16px;letter-spacing:-1.500px;color:#000;">OR</div>
<svg style="left:199.2px;top:85.3px" width="9" height="9" viewBox="0 0 9 9"><path d="M8 1V8.300H0.900z" fill="#d6d6d6" stroke="#5c5c5c" stroke-width="1.100"/></svg>
<div class="b" style="left:209px;top:80px;width:785px;height:21px;background:#ebebeb;border:1px solid #bdbdbd;box-sizing:border-box;"></div>
<svg style="left:212.7px;top:84.2px" width="13" height="12" viewBox="0 0 13 12"><rect x=".5" y=".5" width="12.200" height="10.700" rx="1.800" fill="#f7f7f7" stroke="#b2b2b2"/><path d="M2.400 4h8.400L6.600 8.200z" fill="#d4151a"/></svg>
<div class="t" style="left:229.00px;top:80.67px;font-size:14.67px;line-height:19px;letter-spacing:-0.601px;color:#000;font-weight:bold;">Graph Builder</div>
<div class="t" style="left:501.00px;top:103.97px;font-size:14.67px;line-height:19px;letter-spacing:-0.479px;color:#000;font-weight:bold;">Median vs. TestWk</div>
<div class="b" style="left:256px;top:125px;width:627.3px;height:254px;background:#fff;"></div>
<svg style="left:0;top:0" width="999" height="658" viewBox="0 0 999 658"><path d="M308.0 125V379" stroke="#d6d6d6" stroke-width="1"/><path d="M401.1 125V379" stroke="#d6d6d6" stroke-width="1"/><path d="M494.2 125V379" stroke="#d6d6d6" stroke-width="1"/><path d="M587.3 125V379" stroke="#d6d6d6" stroke-width="1"/><path d="M680.4 125V379" stroke="#d6d6d6" stroke-width="1"/><path d="M773.5 125V379" stroke="#d6d6d6" stroke-width="1"/><path d="M866.6 125V379" stroke="#d6d6d6" stroke-width="1"/><path d="M256 167.1H883.3" stroke="#dcdcdc" stroke-width="1.300"/><path d="M256 209.5H883.3" stroke="#dcdcdc" stroke-width="1.300"/><path d="M256 251.9H883.3" stroke="#dcdcdc" stroke-width="1.300"/><path d="M256 294.4H883.3" stroke="#dcdcdc" stroke-width="1.300"/><path d="M256 336.9H883.3" stroke="#dcdcdc" stroke-width="1.300"/><path d="M255.5 380V125.1H883.3" stroke="#b9b9b9" stroke-width="1.500" fill="none"/><path d="M255.5 379.5H883.3" stroke="#b9b9b9" stroke-width="1.3" fill="none"/><path d="M249.0 167.1h6.5" stroke="#8a8a8a" stroke-width="1"/><path d="M252.2 161.3h3.3" stroke="#8a8a8a" stroke-width="1"/><path d="M249.0 155.6h6.5" stroke="#8a8a8a" stroke-width="1"/><path d="M252.2 149.9h3.3" stroke="#8a8a8a" stroke-width="1"/><path d="M249.0 144.2h6.5" stroke="#8a8a8a" stroke-width="1"/><path d="M252.2 138.4h3.3" stroke="#8a8a8a" stroke-width="1"/><path d="M249.0 132.7h6.5" stroke="#8a8a8a" stroke-width="1"/><path d="M252.2 127.0h3.3" stroke="#8a8a8a" stroke-width="1"/><path d="M249.0 209.5h6.5" stroke="#8a8a8a" stroke-width="1"/><path d="M252.2 203.8h3.3" stroke="#8a8a8a" stroke-width="1"/><path d="M249.0 198.1h6.5" stroke="#8a8a8a" stroke-width="1"/><path d="M252.2 192.3h3.3" stroke="#8a8a8a" stroke-width="1"/><path d="M249.0 186.6h6.5" stroke="#8a8a8a" stroke-width="1"/><path d="M252.2 180.9h3.3" stroke="#8a8a8a" stroke-width="1"/><path d="M249.0 175.2h6.5" stroke="#8a8a8a" stroke-width="1"/><path d="M252.2 169.4h3.3" stroke="#8a8a8a" stroke-width="1"/><path d="M249.0 251.9h6.5" stroke="#8a8a8a" stroke-width="1"/><path d="M252.2 246.2h3.3" stroke="#8a8a8a" stroke-width="1"/><path d="M249.0 240.5h6.5" stroke="#8a8a8a" stroke-width="1"/><path d="M252.2 234.8h3.3" stroke="#8a8a8a" stroke-width="1"/><path d="M249.0 229.0h6.5" stroke="#8a8a8a" stroke-width="1"/><path d="M252.2 223.3h3.3" stroke="#8a8a8a" stroke-width="1"/><path d="M249.0 217.6h6.5" stroke="#8a8a8a" stroke-width="1"/><path d="M252.2 211.9h3.3" stroke="#8a8a8a" stroke-width="1"/><path d="M249.0 294.4h6.5" stroke="#8a8a8a" stroke-width="1"/><path d="M252.2 288.7h3.3" stroke="#8a8a8a" stroke-width="1"/><path d="M249.0 282.9h6.5" stroke="#8a8a8a" stroke-width="1"/><path d="M252.2 277.2h3.3" stroke="#8a8a8a" stroke-width="1"/><path d="M249.0 271.5h6.5" stroke="#8a8a8a" stroke-width="1"/><path d="M252.2 265.8h3.3" stroke="#8a8a8a" stroke-width="1"/><path d="M249.0 260.0h6.5" stroke="#8a8a8a" stroke-width="1"/><path d="M252.2 254.3h3.3" stroke="#8a8a8a" stroke-width="1"/><path d="M249.0 336.9h6.5" stroke="#8a8a8a" stroke-width="1"/><path d="M252.2 331.1h3.3" stroke="#8a8a8a" stroke-width="1"/><path d="M249.0 325.4h6.5" stroke="#8a8a8a" stroke-width="1"/><path d="M252.2 319.7h3.3" stroke="#8a8a8a" stroke-width="1"/><path d="M249.0 314.0h6.5" stroke="#8a8a8a" stroke-width="1"/><path d="M252.2 308.2h3.3" stroke="#8a8a8a" stroke-width="1"/><path d="M249.0 302.5h6.5" stroke="#8a8a8a" stroke-width="1"/><path d="M252.2 296.8h3.3" stroke="#8a8a8a" stroke-width="1"/><path d="M249.0 379.3h6.5" stroke="#8a8a8a" stroke-width="1"/><path d="M252.2 373.6h3.3" stroke="#8a8a8a" stroke-width="1"/><path d="M249.0 367.9h6.5" stroke="#8a8a8a" stroke-width="1"/><path d="M252.2 362.1h3.3" stroke="#8a8a8a" stroke-width="1"/><path d="M249.0 356.4h6.5" stroke="#8a8a8a" stroke-width="1"/><path d="M252.2 350.7h3.3" stroke="#8a8a8a" stroke-width="1"/><path d="M249.0 345.0h6.5" stroke="#8a8a8a" stroke-width="1"/><path d="M252.2 339.2h3.3" stroke="#8a8a8a" stroke-width="1"/><path d="M308.0 380v6" stroke="#8a8a8a" stroke-width="1"/><path d="M401.1 380v6" stroke="#8a8a8a" stroke-width="1"/><path d="M494.2 380v6" stroke="#8a8a8a" stroke-width="1"/><path d="M587.3 380v6" stroke="#8a8a8a" stroke-width="1"/><path d="M680.4 380v6" stroke="#8a8a8a" stroke-width="1"/><path d="M773.5 380v6" stroke="#8a8a8a" stroke-width="1"/><path d="M866.6 380v6" stroke="#8a8a8a" stroke-width="1"/><circle cx="261" cy="137.8" r="2.75" fill="#000"/><circle cx="308" cy="169.4" r="2.75" fill="#000"/><circle cx="354" cy="142.6" r="2.75" fill="#000"/><circle cx="400.6" cy="237" r="2.75" fill="#000"/><circle cx="447.2" cy="268.2" r="2.75" fill="#000"/><circle cx="493.8" cy="224.6" r="2.75" fill="#000"/><circle cx="540.3" cy="254.6" r="2.75" fill="#000"/><circle cx="586.8" cy="187.4" r="2.75" fill="#000"/><circle cx="633.4" cy="320.8" r="2.75" fill="#000"/><circle cx="680.2" cy="353.2" r="2.75" fill="#000"/><circle cx="726.6" cy="308" r="2.75" fill="#000"/><circle cx="773.2" cy="339.6" r="2.75" fill="#000"/><circle cx="819.6" cy="239.4" r="2.75" fill="#000"/><circle cx="866.6" cy="291.2" r="2.75" fill="#000"/><circle cx="930.8" cy="134" r="2.75" fill="#000"/></svg>
<div class="t" style="left:240.20px;top:158.79px;font-size:12px;line-height:16px;letter-spacing:-0.873px;color:#222;">0</div>
<div class="t" style="left:231.00px;top:147.39px;font-size:12px;line-height:16px;letter-spacing:-0.760px;color:#222;">0.1</div>
<div class="t" style="left:231.00px;top:135.89px;font-size:12px;line-height:16px;letter-spacing:-0.760px;color:#222;">0.2</div>
<div class="t" style="left:231.00px;top:124.39px;font-size:12px;line-height:16px;letter-spacing:-0.760px;color:#222;">0.3</div>
<div class="t" style="left:857.00px;top:131.14px;font-size:12px;line-height:16px;letter-spacing:-0.252px;color:#555;">N: 2</div>
<div class="t" style="left:240.20px;top:201.94px;font-size:12px;line-height:16px;letter-spacing:-0.873px;color:#222;">0</div>
<div class="t" style="left:231.00px;top:190.44px;font-size:12px;line-height:16px;letter-spacing:-0.760px;color:#222;">0.1</div>
<div class="t" style="left:231.00px;top:179.34px;font-size:12px;line-height:16px;letter-spacing:-0.760px;color:#222;">0.2</div>
<div class="t" style="left:231.00px;top:169.14px;font-size:12px;line-height:16px;letter-spacing:-0.760px;color:#222;">0.3</div>
<div class="t" style="left:857.00px;top:173.59px;font-size:12px;line-height:16px;letter-spacing:-0.252px;color:#555;">N: 2</div>
<div class="t" style="left:240.20px;top:244.39px;font-size:12px;line-height:16px;letter-spacing:-0.873px;color:#222;">0</div>
<div class="t" style="left:231.00px;top:232.89px;font-size:12px;line-height:16px;letter-spacing:-0.760px;color:#222;">0.1</div>
<div class="t" style="left:231.00px;top:221.79px;font-size:12px;line-height:16px;letter-spacing:-0.760px;color:#222;">0.2</div>
<div class="t" style="left:231.00px;top:211.59px;font-size:12px;line-height:16px;letter-spacing:-0.760px;color:#222;">0.3</div>
<div class="t" style="left:857.00px;top:216.04px;font-size:12px;line-height:16px;letter-spacing:-0.252px;color:#555;">N: 3</div>
<div class="t" style="left:240.20px;top:286.84px;font-size:12px;line-height:16px;letter-spacing:-0.873px;color:#222;">0</div>
<div class="t" style="left:231.00px;top:275.34px;font-size:12px;line-height:16px;letter-spacing:-0.760px;color:#222;">0.1</div>
<div class="t" style="left:231.00px;top:264.24px;font-size:12px;line-height:16px;letter-spacing:-0.760px;color:#222;">0.2</div>
<div class="t" style="left:231.00px;top:254.04px;font-size:12px;line-height:16px;letter-spacing:-0.760px;color:#222;">0.3</div>
<div class="t" style="left:857.00px;top:258.49px;font-size:12px;line-height:16px;letter-spacing:-0.252px;color:#555;">N: 3</div>
<div class="t" style="left:240.20px;top:329.29px;font-size:12px;line-height:16px;letter-spacing:-0.873px;color:#222;">0</div>
<div class="t" style="left:231.00px;top:317.79px;font-size:12px;line-height:16px;letter-spacing:-0.760px;color:#222;">0.1</div>
<div class="t" style="left:231.00px;top:306.69px;font-size:12px;line-height:16px;letter-spacing:-0.760px;color:#222;">0.2</div>
<div class="t" style="left:231.00px;top:296.49px;font-size:12px;line-height:16px;letter-spacing:-0.760px;color:#222;">0.3</div>
<div class="t" style="left:857.00px;top:300.94px;font-size:12px;line-height:16px;letter-spacing:-0.252px;color:#555;">N: 2</div>
<div class="t" style="left:240.20px;top:371.74px;font-size:12px;line-height:16px;letter-spacing:-0.873px;color:#222;">0</div>
<div class="t" style="left:231.00px;top:360.24px;font-size:12px;line-height:16px;letter-spacing:-0.760px;color:#222;">0.1</div>
<div class="t" style="left:231.00px;top:349.14px;font-size:12px;line-height:16px;letter-spacing:-0.760px;color:#222;">0.2</div>
<div class="t" style="left:231.00px;top:338.94px;font-size:12px;line-height:16px;letter-spacing:-0.760px;color:#222;">0.3</div>
<div class="t" style="left:857.00px;top:343.39px;font-size:12px;line-height:16px;letter-spacing:-0.252px;color:#555;">N: 2</div>
<div class="t" style="left:301.50px;top:386.94px;font-size:12px;line-height:16px;letter-spacing:-0.173px;color:#222;">20</div>
<div class="t" style="left:394.60px;top:386.94px;font-size:12px;line-height:16px;letter-spacing:-0.173px;color:#222;">22</div>
<div class="t" style="left:487.70px;top:386.94px;font-size:12px;line-height:16px;letter-spacing:-0.173px;color:#222;">24</div>
<div class="t" style="left:580.80px;top:386.94px;font-size:12px;line-height:16px;letter-spacing:-0.173px;color:#222;">26</div>
<div class="t" style="left:673.90px;top:386.94px;font-size:12px;line-height:16px;letter-spacing:-0.173px;color:#222;">28</div>
<div class="t" style="left:767.00px;top:386.94px;font-size:12px;line-height:16px;letter-spacing:-0.173px;color:#222;">30</div>
<div class="t" style="left:860.10px;top:386.94px;font-size:12px;line-height:16px;letter-spacing:-0.173px;color:#222;">32</div>
<div class="t" style="left:549.00px;top:402.14px;font-size:12px;line-height:16px;letter-spacing:-0.556px;color:#222;">TestWk</div>
<div class="t" style="left:220.500px;top:251px;width:0;height:0;"><div class="t" style="transform:translate(-50%,-50%) rotate(-90deg);font-size:12px;line-height:14px;letter-spacing:-0.250px;color:#222">Median</div></div>
<div class="b" style="left:883.3px;top:125px;width:17.0px;height:254.5px;background:#f1f1ec;"></div>
<div class="b" style="left:883.3px;top:125.0px;width:17.0px;height:41.25px;background:#e8e8e1;"></div>
<div class="t" style="left:891.5px;top:146.0px;width:0;height:0;"><div class="t" style="transform:translate(-50%,-50%) rotate(90deg);font-size:12px;line-height:14px;color:#333">1</div></div>
<div class="b" style="left:883.3px;top:167.85000000000002px;width:17.0px;height:40.849999999999966px;background:#e8e8e1;"></div>
<div class="t" style="left:891.5px;top:188.5px;width:0;height:0;"><div class="t" style="transform:translate(-50%,-50%) rotate(90deg);font-size:12px;line-height:14px;color:#333">2</div></div>
<div class="b" style="left:883.3px;top:210.3px;width:17.0px;height:40.849999999999966px;background:#e8e8e1;"></div>
<div class="t" style="left:891.5px;top:230.9px;width:0;height:0;"><div class="t" style="transform:translate(-50%,-50%) rotate(90deg);font-size:12px;line-height:14px;color:#333">3</div></div>
<div class="b" style="left:883.3px;top:252.75px;width:17.0px;height:40.849999999999966px;background:#e8e8e1;"></div>
<div class="t" style="left:891.5px;top:273.4px;width:0;height:0;"><div class="t" style="transform:translate(-50%,-50%) rotate(90deg);font-size:12px;line-height:14px;color:#333">4</div></div>
<div class="b" style="left:883.3px;top:295.2px;width:17.0px;height:40.849999999999966px;background:#e8e8e1;"></div>
<div class="t" style="left:891.5px;top:315.8px;width:0;height:0;"><div class="t" style="transform:translate(-50%,-50%) rotate(90deg);font-size:12px;line-height:14px;color:#333">5</div></div>
<div class="b" style="left:883.3px;top:337.65000000000003px;width:17.0px;height:42.049999999999955px;background:#e8e8e1;"></div>
<div class="t" style="left:891.5px;top:358.3px;width:0;height:0;"><div class="t" style="transform:translate(-50%,-50%) rotate(90deg);font-size:12px;line-height:14px;color:#333">6</div></div>
<div class="b" style="left:900.3px;top:125px;width:16.90000000000009px;height:254.5px;background:#dbdbcc;"></div>
<div class="t" style="left:908.7px;top:253px;width:0;height:0;"><div class="t" style="transform:translate(-50%,-50%) rotate(90deg);font-size:12px;line-height:14px;font-weight:bold;letter-spacing:-0.2px;color:#000">TestStage</div></div>
<div class="t" style="left:942.00px;top:125.64px;font-size:12px;line-height:16px;letter-spacing:-0.392px;color:#222;">Median</div>
<div class="t" style="left:210.00px;top:418.74px;font-size:12px;line-height:16px;letter-spacing:-0.470px;color:#111;">Where(TestWk = 19, 20, 21, 22, 23, 24, 25, 26, 27, 28, 29, 30, 31, 32)</div>
<svg style="left:199.2px;top:440.8px" width="9" height="9" viewBox="0 0 9 9"><path d="M8 1V8.300H0.900z" fill="#d6d6d6" stroke="#5c5c5c" stroke-width="1.100"/></svg>
<div class="b" style="left:209px;top:435.3px;width:338px;height:21.0px;background:#ebebeb;border:1px solid #bdbdbd;box-sizing:border-box;"></div>
<svg style="left:212.7px;top:439.7px" width="13" height="12" viewBox="0 0 13 12"><rect x=".5" y=".5" width="12.200" height="10.700" rx="1.800" fill="#f7f7f7" stroke="#b2b2b2"/><path d="M2.400 4h8.400L6.600 8.200z" fill="#d4151a"/></svg>
<div class="t" style="left:229.00px;top:436.67px;font-size:14.67px;line-height:19px;letter-spacing:-0.278px;color:#000;font-weight:bold;">Tabulate</div>
<div class="b" style="left:224px;top:474px;width:138px;height:115px;background:#fff;"></div>
<div class="b" style="left:226px;top:507.7px;width:135px;height:16.19999999999999px;background:#f3f3f3;"></div>
<div class="b" style="left:226px;top:540.1px;width:135px;height:16.199999999999932px;background:#f3f3f3;"></div>
<div class="b" style="left:226px;top:572.5px;width:135px;height:16.200000000000045px;background:#f3f3f3;"></div>
<div class="b" style="left:224px;top:474px;width:138px;height:115px;border:1px solid #7d7d7d;box-sizing:border-box;"></div>
<div class="b" style="left:224px;top:474px;width:138px;height:18px;background:#fbfbfb;border:1px solid #7d7d7d;box-sizing:border-box;"></div>
<div class="b" style="left:292px;top:474px;width:1px;height:115px;background:#7d7d7d;"></div>
<div class="t" style="left:227.50px;top:475.14px;font-size:12px;line-height:16px;letter-spacing:-0.440px;color:#000;font-weight:bold;">TestStage</div>
<div class="t" style="left:304.50px;top:475.14px;font-size:12px;line-height:16px;letter-spacing:-0.285px;color:#000;font-weight:bold;">Die tested</div>
<div class="t" style="left:228.00px;top:492.24px;font-size:12px;line-height:16px;letter-spacing:-0.673px;color:#111;">1</div>
<div class="t" style="left:353.00px;top:492.24px;font-size:12px;line-height:16px;letter-spacing:-0.673px;color:#111;">2</div>
<div class="t" style="left:228.00px;top:508.44px;font-size:12px;line-height:16px;letter-spacing:-0.673px;color:#111;">2</div>
<div class="t" style="left:353.00px;top:508.44px;font-size:12px;line-height:16px;letter-spacing:-0.673px;color:#111;">2</div>
<div class="t" style="left:228.00px;top:524.64px;font-size:12px;line-height:16px;letter-spacing:-0.673px;color:#111;">3</div>
<div class="t" style="left:353.00px;top:524.64px;font-size:12px;line-height:16px;letter-spacing:-0.673px;color:#111;">3</div>
<div class="t" style="left:228.00px;top:540.84px;font-size:12px;line-height:16px;letter-spacing:-0.673px;color:#111;">4</div>
<div class="t" style="left:353.00px;top:540.84px;font-size:12px;line-height:16px;letter-spacing:-0.673px;color:#111;">3</div>
<div class="t" style="left:228.00px;top:557.04px;font-size:12px;line-height:16px;letter-spacing:-0.673px;color:#111;">5</div>
<div class="t" style="left:353.00px;top:557.04px;font-size:12px;line-height:16px;letter-spacing:-0.673px;color:#111;">2</div>
<div class="t" style="left:228.00px;top:573.24px;font-size:12px;line-height:16px;letter-spacing:-0.673px;color:#111;">6</div>
<div class="t" style="left:353.00px;top:573.24px;font-size:12px;line-height:16px;letter-spacing:-0.673px;color:#111;">2</div>
<div class="t" style="left:210.00px;top:602.34px;font-size:12px;line-height:16px;letter-spacing:-0.470px;color:#111;">Where(TestWk = 19, 20, 21, 22, 23, 24, 25, 26, 27, 28, 29, 30, 31, 32)</div>
<div class="t" style="left:210.00px;top:617.64px;font-size:12px;line-height:16px;letter-spacing:-0.411px;color:#111;">18 rows have been excluded.</div>
<div class="b" style="left:0px;top:635px;width:999px;height:1.5px;background:#a0abd5;"></div>
<div class="b" style="left:0px;top:636.5px;width:999px;height:1.0px;background:#f4f6fb;"></div>
<div class="b" style="left:0px;top:637.5px;width:999px;height:19.5px;background:#dfe5f1;"></div>
<div class="b" style="left:904px;top:639px;width:1px;height:17px;background:#8c93a8;"></div>
<svg style="left:910px;top:640px" width="28" height="13" viewBox="0 0 28 13"><path d="M0.500 6L5.700 1.200 11 6" stroke="#2a8fd8" stroke-width="1.800" fill="none"/><path d="M2 6.5L6 2.8l4 3.7V12H2z" fill="#cfe4f7" stroke="#5b9bd5" stroke-width=".8"/><rect x="4.8" y="7" width="2.6" height="5" fill="#b8860b"/><rect x="16" y="1" width="10" height="9" fill="#fff" stroke="#2a62b0" stroke-width="1.200"/><path d="M16.500 2.300h9" stroke="#e8817a" stroke-width="1.200"/><path d="M16 4.700h10M16 7.200h10M19.500 1v9M23 1v9" stroke="#9fc0ea" stroke-width=".7"/><circle cx="22.500" cy="5" r="1" fill="#222"/><path d="M22.800 5.500l3.800 3.300-1.800.3-.6 1.800z" fill="#1b56a8"/></svg>
<div class="b" style="left:948px;top:640px;width:13px;height:12.299999999999955px;background:#fff;border:1px solid #666;box-sizing:border-box;"></div>
<svg style="left:966.700px;top:642.800px" width="8" height="6" viewBox="0 0 8 6"><path d="M0 0h7.800L3.900 5.500z" fill="#000"/></svg>
<div class="b" style="left:985px;top:653px;width:2px;height:2px;background:#bcc3da;"></div>
<div class="b" style="left:988px;top:650px;width:2px;height:2px;background:#bcc3da;"></div>
<div class="b" style="left:988px;top:653px;width:2px;height:2px;background:#bcc3da;"></div>
<div class="b" style="left:991px;top:647px;width:2px;height:2px;background:#bcc3da;"></div>
<div class="b" style="left:991px;top:650px;width:2px;height:2px;background:#bcc3da;"></div>
<div class="b" style="left:991px;top:653px;width:2px;height:2px;background:#bcc3da;"></div>
<div class="b" style="left:994px;top:644px;width:2px;height:2px;background:#bcc3da;"></div>
<div class="b" style="left:994px;top:647px;width:2px;height:2px;background:#bcc3da;"></div>
<div class="b" style="left:994px;top:650px;width:2px;height:2px;background:#bcc3da;"></div>
<div class="b" style="left:994px;top:653px;width:2px;height:2px;background:#bcc3da;"></div>
<div class="b" style="left:1px;top:30px;width:1.2000000000000002px;height:627px;background:#fdfdfd;"></div>
<div class="b" style="left:0px;top:0px;width:999px;height:1px;background:#151515;"></div>
<div class="b" style="left:0px;top:0px;width:1px;height:658px;background:#3c3c3c;"></div>
<div class="b" style="left:0px;top:0px;width:1px;height:75px;background:#151515;"></div>
<div class="b" style="left:0px;top:656.7px;width:999px;height:1.2999999999999545px;background:#555;"></div>
<div class="b" style="left:998px;top:1px;width:1px;height:657px;background:#444;"></div>
<div class="b" style="left:998px;top:0px;width:1px;height:67px;background:#151515;"></div>
</div></body></html>
